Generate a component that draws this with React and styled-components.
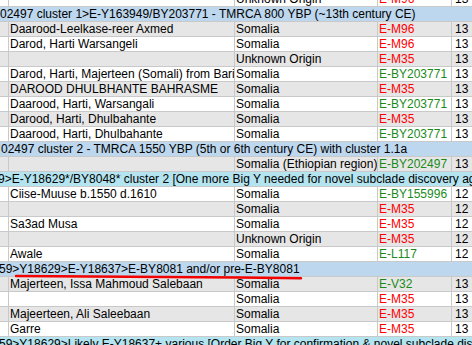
import styled, { createGlobalStyle } from "styled-components";

const GlobalStyle = createGlobalStyle`
  html, body {
    margin: 0;
    padding: 0;
    background: #ffffff;
  }
  body {
    font-family: "Liberation Sans", Arial, sans-serif;
  }
`;

const Sheet = styled.div`
  position: relative;
  width: 472px;
  height: 345px;
  overflow: hidden;
  background: #ffffff;
`;

// the sheet is scrolled: the first row sits partly above the window
const Rows = styled.div`
  margin-top: -8px;
  display: flex;
  flex-direction: column;
`;

const DataRow = styled.div`
  display: grid;
  grid-template-columns: 9px 226px 143px 74px 60px;
  height: 15px;
  background: ${(p) => (p.$shaded ? "#e6e6e6" : "#ffffff")};
`;

const Cell = styled.div`
  box-sizing: border-box;
  height: 15px;
  padding: 0 0 0 ${(p) => p.$pad || 1}px;
  border-right: 1px solid #c9c9c9;
  border-bottom: 1px solid #c9c9c9;
  font-size: 12px;
  line-height: 14px;
  color: ${(p) => p.$color || "#000000"};
  white-space: nowrap;
  overflow: hidden;
`;

const BandRow = styled.div`
  box-sizing: border-box;
  height: 15px;
  border-bottom: 1px solid #c9c9c9;
  background: ${(p) => (p.$tone === "cyan" ? "#b4e4ef" : "#bdd7ee")};
  overflow: hidden;
`;

const BandText = styled.div`
  margin-left: ${(p) => p.$shift}px;
  font-size: 12px;
  line-height: 14px;
  color: #000000;
  white-space: nowrap;
`;

const Annotation = styled.svg`
  position: absolute;
  left: 0;
  top: 0;
  pointer-events: none;
`;

const RED = "#ff0000";
const GREEN = "#1b8a1b";

const rows = [
  { name: "", origin: "Unknown Origin", hg: "E-M96", n: 13 },
  { band: "blue", shift: 0, text: "02497 cluster 1>E-Y163949/BY203771 - TMRCA 800 YBP (~13th century CE)" },
  { shaded: true, name: "Daarood-Leelkase-reer Axmed", origin: "Somalia", hg: "E-M96", n: 13 },
  { name: "Darod, Harti Warsangeli", origin: "Somalia", hg: "E-M96", n: 13 },
  { shaded: true, name: "", origin: "Unknown Origin", hg: "E-M35", n: 13 },
  { name: "Darod, Harti, Majerteen (Somali) from Bari", origin: "Somalia", hg: "E-BY203771", n: 13 },
  { shaded: true, name: "DAROOD DHULBHANTE BAHRASME", origin: "Somalia", hg: "E-M35", n: 13 },
  { name: "Daarood, Harti, Warsangali", origin: "Somalia", hg: "E-BY203771", n: 13 },
  { shaded: true, name: "Darood, Harti, Dhulbahante", origin: "Somalia", hg: "E-M35", n: 13 },
  { name: "Daarood, Harti, Dhulbahante", origin: "Somalia", hg: "E-BY203771", n: 13 },
  { band: "blue", shift: 1, text: "02497 cluster 2 - TMRCA 1550 YBP (5th or 6th century CE) with cluster 1.1a" },
  { shaded: true, name: "", origin: "Somalia (Ethiopian region)", hg: "E-BY202497", n: 13 },
  { band: "cyan", shift: -2, text: "9>E-Y18629*/BY8048* cluster 2 [One more Big Y needed for novel subclade discovery against known clusters]" },
  { name: "Ciise-Muuse b.1550 d.1610", origin: "Somalia", hg: "E-BY155996", n: 12 },
  { shaded: true, name: "", origin: "Somalia", hg: "E-M35", n: 12 },
  { name: "Sa3ad Musa", origin: "Somalia", hg: "E-M35", n: 12 },
  { shaded: true, name: "", origin: "Unknown Origin", hg: "E-M35", n: 12 },
  { name: "Awale", origin: "Somalia", hg: "E-L117", n: 12 },
  { band: "blue", shift: -1, text: "59>Y18629>E-Y18637>E-BY8081 and/or pre-E-BY8081" },
  { shaded: true, name: "Majerteen, Issa Mahmoud Salebaan", origin: "Somalia", hg: "E-V32", n: 13 },
  { name: "", origin: "Somalia", hg: "E-M35", n: 13 },
  { shaded: true, name: "Majeerteen, Ali Saleebaan", origin: "Somalia", hg: "E-M35", n: 13 },
  { name: "Garre", origin: "Somalia", hg: "E-M35", n: 13 },
  { band: "cyan", shift: -1, text: "59>Y18629>Likely E-Y18637+ various [Order Big Y for confirmation & novel subclade discovery]" },
];

// broad haplogroups in red, refined ones in green
const hgColor = (hg) => (hg === "E-M35" || hg === "E-M96" ? RED : GREEN);

export default function App() {
  return (
    <Sheet>
      <GlobalStyle />
      <Rows>
        {rows.map((r, i) =>
          r.band ? (
            <BandRow key={i} $tone={r.band}>
              <BandText $shift={r.shift}>{r.text}</BandText>
            </BandRow>
          ) : (
            <DataRow key={i} $shaded={r.shaded}>
              <Cell />
              <Cell>{r.name}</Cell>
              <Cell>{r.origin}</Cell>
              <Cell $color={hgColor(r.hg)}>{r.hg}</Cell>
              <Cell $pad={3}>{r.n}</Cell>
            </DataRow>
          )
        )}
      </Rows>

      {/* hand-drawn red underline */}
      <Annotation width="472" height="345" viewBox="0 0 472 345">
        <path
          d="M16 276 C 90 276.2, 200 277, 301 278.2"
          fill="none"
          stroke="#f20000"
          strokeWidth="2.4"
          strokeLinecap="round"
        />
      </Annotation>
    </Sheet>
  );
}
